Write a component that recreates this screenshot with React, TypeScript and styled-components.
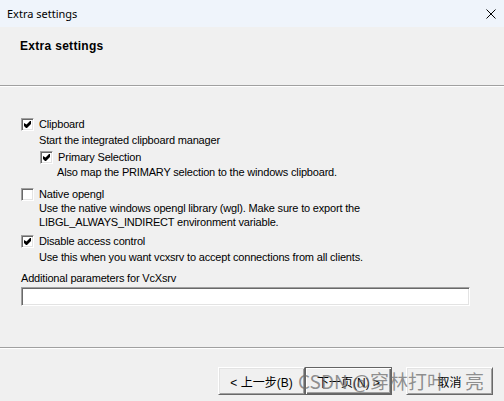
import styled, { createGlobalStyle } from "styled-components";

const GlobalStyle = createGlobalStyle`
  html, body {
    margin: 0;
    padding: 0;
    background: #f0f0f0;
  }
  body {
    font-family: "Liberation Sans", Arial, sans-serif;
    color: #000;
  }
`;

const Window = styled.div`
  position: relative;
  width: 504px;
  height: 401px;
  display: flex;
  flex-direction: column;
  background: #f0f0f0;
  overflow: hidden;
`;

const TitleBar = styled.div`
  flex: none;
  height: 27px;
  box-sizing: border-box;
  display: flex;
  align-items: center;
  justify-content: space-between;
  padding: 0 8px 0 7px;
  background: #eff4fb;
  font-family: "Noto Sans", sans-serif;
  font-size: 11px;
`;

const CloseIcon = () => (
  <svg width="10" height="10" viewBox="0 0 10 10">
    <path d="M0.5 0.5 L9.5 9.5 M9.5 0.5 L0.5 9.5" stroke="#000" strokeWidth="1" />
  </svg>
);

const Header = styled.div`
  flex: none;
  height: 59px;
  box-sizing: border-box;
  padding: 12px 0 0 20px;
  border-bottom: 1px solid #a0a0a0;
  box-shadow: 0 1px 0 #ffffff;
`;

const HeaderTitle = styled.h1`
  margin: 0;
  font-size: 12px;
  line-height: 14px;
  font-weight: bold;
  letter-spacing: 0.3px;
`;

const Content = styled.div`
  flex: 1;
  display: flex;
  flex-direction: column;
  align-items: flex-start;
  padding: 31px 0 0 21px;
  font-size: 11px;
  line-height: 14px;
  letter-spacing: -0.18px;
`;

const CheckRow = styled.label<{ $top: number; $indent?: number }>`
  display: flex;
  align-items: center;
  gap: 5px;
  height: 14px;
  margin-top: ${(p) => p.$top}px;
  margin-left: ${(p) => p.$indent ?? 0}px;
`;

const Box = styled.span`
  position: relative;
  flex: none;
  width: 13px;
  height: 13px;
  box-sizing: border-box;
  background: #fff;
  border: 1px solid;
  border-color: #a0a0a0 #ffffff #ffffff #a0a0a0;
  box-shadow: inset 1px 1px 0 #696969, inset -1px -1px 0 #e3e3e3;

  svg {
    position: absolute;
    left: -1px;
    top: -1px;
  }
`;

const Hint = styled.div<{ $top: number; $indent: number }>`
  margin-top: ${(p) => p.$top}px;
  margin-left: ${(p) => p.$indent}px;
`;

const Checkbox = ({ checked }: { checked?: boolean }) => (
  <Box>
    {checked && (
      <svg width="13" height="13" viewBox="0 0 13 13">
        <path d="M3 5 L3 8 L5 10 L6 10 L10 6 L10 3 L9 3 L5.5 6.5 Z" fill="#000" />
      </svg>
    )}
  </Box>
);

const FieldLabel = styled.div`
  margin-top: 7px;
`;

const TextInput = styled.input`
  margin-top: 2px;
  width: 449px;
  height: 19px;
  box-sizing: border-box;
  padding: 0 3px;
  background: #fff;
  border: 1px solid;
  border-color: #a0a0a0 #ffffff #ffffff #a0a0a0;
  box-shadow: inset 1px 1px 0 #696969, inset -1px -1px 0 #e3e3e3;
  font: inherit;
  outline: none;
`;

const Footer = styled.div`
  flex: none;
  height: 54px;
  box-sizing: border-box;
  display: flex;
  justify-content: flex-end;
  align-items: flex-start;
  padding: 19px 11px 0 0;
  border-top: 1px solid #a0a0a0;
  box-shadow: inset 0 1px 0 #ffffff;
`;

const Button = styled.button<{ $default?: boolean; $gap?: number }>`
  width: 87px;
  height: 28px;
  margin-left: ${(p) => p.$gap ?? 0}px;
  padding: 0;
  background: #f0f0f0;
  border: 1px solid;
  border-color: ${(p) =>
    p.$default ? "#646464" : "#ffffff #696969 #696969 #ffffff"};
  box-shadow: ${(p) =>
    p.$default
      ? "inset 1px 1px 0 #ffffff, inset -1px -1px 0 #696969, inset -2px -2px 0 #a0a0a0"
      : "inset 1px 1px 0 #e3e3e3, inset -1px -1px 0 #a0a0a0"};
  font-family: "Liberation Sans", "Noto Sans CJK SC", sans-serif;
  font-size: 12px;
  color: #000;
`;

const Watermark = styled.div`
  position: absolute;
  left: 298px;
  top: 369px;
  font-family: "Noto Sans CJK SC", "Noto Sans", sans-serif;
  font-size: 19px;
  line-height: 24px;
  white-space: pre;
  color: rgba(110, 110, 110, 0.75);
  pointer-events: none;
`;

export default function App() {
  return (
    <>
      <GlobalStyle />
      <Window>
        <TitleBar>
          <span>Extra settings</span>
          <CloseIcon />
        </TitleBar>
        <Header>
          <HeaderTitle>Extra settings</HeaderTitle>
        </Header>
        <Content>
          <CheckRow $top={0}>
            <Checkbox checked />
            Clipboard
          </CheckRow>
          <Hint $top={2} $indent={18}>Start the integrated clipboard manager</Hint>
          <CheckRow $top={3} $indent={19}>
            <Checkbox checked />
            Primary Selection
          </CheckRow>
          <Hint $top={1} $indent={36}>
            Also map the PRIMARY selection to the windows clipboard.
          </Hint>
          <CheckRow $top={8}>
            <Checkbox />
            Native opengl
          </CheckRow>
          <Hint $top={0} $indent={18}>
            Use the native windows opengl library (wgl). Make sure to export the
            <br />
            LIBGL_ALWAYS_INDIRECT environment variable.
          </Hint>
          <CheckRow $top={5}>
            <Checkbox checked />
            Disable access control
          </CheckRow>
          <Hint $top={2} $indent={18}>
            Use this when you want vcxsrv to accept connections from all clients.
          </Hint>
          <FieldLabel>Additional parameters for VcXsrv</FieldLabel>
          <TextInput />
        </Content>
        <Footer>
          <Button>&lt; 上一步(B)</Button>
          <Button $default>下一页(N) &gt;</Button>
          <Button $gap={14}>取消</Button>
        </Footer>
        <Watermark>{"CSDN @穿林打叶\u3000亮"}</Watermark>
      </Window>
    </>
  );
}
